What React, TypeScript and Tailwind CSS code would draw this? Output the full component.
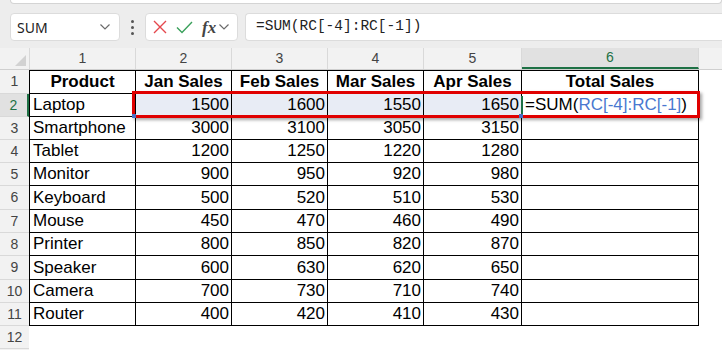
import React from 'react';

const rows = [
  { name: 'Laptop', v: [1500, 1600, 1550, 1650], h: 'h-[23px]' },
  { name: 'Smartphone', v: [3000, 3100, 3050, 3150], h: 'h-[23px]' },
  { name: 'Tablet', v: [1200, 1250, 1220, 1280], h: 'h-[23px]' },
  { name: 'Monitor', v: [900, 950, 920, 980], h: 'h-[23px]' },
  { name: 'Keyboard', v: [500, 520, 510, 530], h: 'h-[24px]' },
  { name: 'Mouse', v: [450, 470, 460, 490], h: 'h-[23px]' },
  { name: 'Printer', v: [800, 850, 820, 870], h: 'h-[23px]' },
  { name: 'Speaker', v: [600, 630, 620, 650], h: 'h-[24px]' },
  { name: 'Camera', v: [700, 730, 710, 740], h: 'h-[23px]' },
  { name: 'Router', v: [400, 420, 410, 430], h: 'h-[23px]' },
];

const widths = ['w-[107px]', 'w-[96px]', 'w-[96px]', 'w-[96px]', 'w-[98px]', 'w-[177px]'];
const headers = ['Product', 'Jan Sales', 'Feb Sales', 'Mar Sales', 'Apr Sales', 'Total Sales'];

const Chevron = () => (
  <svg width="12" height="8" viewBox="0 0 12 8" fill="none">
    <path d="M1.5 1.5 L6 6 L10.5 1.5" stroke="#6b6b6b" strokeWidth="1.2" />
  </svg>
);

const RowHead = ({ n, active, h }: { n?: number; active?: boolean; h: string }) => (
  <div
    className={`w-[29px] ${h} shrink-0 flex items-center justify-center text-[14px] border-b border-[#d9d9d9] ${
      active ? 'bg-[#e1e1e1] text-[#1e7145] border-r-2 border-r-[#1e7145]' : 'bg-[#f2f2f2] text-[#444]'
    }`}
  >
    {n}
  </div>
);

export default function App() {
  return (
    <div
      className="w-[722px] h-[350px] bg-[#ededed] overflow-hidden relative"
      style={{ fontFamily: '"Liberation Sans", Arial, sans-serif' }}
    >
      {/* ribbon edge */}
      <div className="ml-[10px] h-[4px] bg-white border border-t-0 border-[#d4d4d4] rounded-b-[5px]" />

      {/* formula bar */}
      <div className="mt-[9px] h-[28px] flex items-stretch pl-[10px]">
        <div className="w-[110px] bg-white border border-[#dcdcdc] rounded-[4px] flex items-center justify-between pl-[6px] pr-[8px]">
          <span className="text-[14px] text-[#222]" style={{ fontFamily: '"Noto Sans", sans-serif' }}>SUM</span>
          <Chevron />
        </div>
        <div className="w-[25px] flex flex-col items-center justify-center gap-[3px]">
          <div className="w-[3px] h-[3px] rounded-full bg-[#555]" />
          <div className="w-[3px] h-[3px] rounded-full bg-[#555]" />
          <div className="w-[3px] h-[3px] rounded-full bg-[#555]" />
        </div>
        <div className="w-[93px] bg-white border border-[#dcdcdc] rounded-[4px] flex items-center pl-[7px] gap-[9px]">
          <svg width="14" height="14" viewBox="0 0 14 14">
            <path d="M1 1 L13 13 M13 1 L1 13" stroke="#e5484d" strokeWidth="1.4" />
          </svg>
          <svg width="17" height="13" viewBox="0 0 17 13" fill="none">
            <path d="M1 6.5 L6 11.5 L16 1" stroke="#3aa05b" strokeWidth="1.4" />
          </svg>
          <div className="flex items-center gap-[2px]">
            <span className="text-[17px] italic font-bold text-[#444] leading-none" style={{ fontFamily: '"Liberation Serif", serif' }}>
              fx
            </span>
            <Chevron />
          </div>
        </div>
        <div className="flex-1 ml-[7px] bg-white border border-[#dcdcdc] border-r-0 rounded-l-[4px] flex items-center pl-[10px]">
          <span className="text-[14.5px] text-[#222]" style={{ fontFamily: '"Liberation Mono", monospace' }}>
            =SUM(RC[-4]:RC[-1])
          </span>
        </div>
      </div>

      {/* column headers */}
      <div className="mt-[7px] flex h-[22px] bg-[#f2f2f2] border-b border-[#cfcfcf]">
        <div className="w-[29px] relative shrink-0">
          <div
            className="absolute right-[3px] bottom-[3px] w-[11px] h-[11px] bg-[#d2d2d2]"
            style={{ clipPath: 'polygon(100% 0, 100% 100%, 0 100%)' }}
          />
        </div>
        {widths.map((w, i) => (
          <div
            key={i}
            className={`${w} shrink-0 flex items-center justify-center text-[14px] border-r border-[#d9d9d9] ${
              i === 0 ? 'border-l' : ''
            } ${i === 5 ? 'bg-[#e1e1e1] text-[#1e7145] border-b-2 border-b-[#1e7145]' : 'text-[#444]'}`}
          >
            {i + 1}
          </div>
        ))}
        <div className="flex-1" />
      </div>

      {/* grid */}
      <div className="bg-white text-[17px] text-black">
        <div className="flex">
          <RowHead n={1} h="h-[24px]" />
          {headers.map((t, i) => (
            <div
              key={t}
              className={`${widths[i]} h-[24px] shrink-0 border-t border-b border-r border-black font-bold flex items-center justify-center ${
                i === 0 ? 'border-l' : ''
              }`}
            >
              {t}
            </div>
          ))}
        </div>
        {rows.map((r, ri) => (
          <div key={r.name} className="flex">
            <RowHead n={ri + 2} h={r.h} active={ri === 0} />
            <div className={`${widths[0]} ${r.h} shrink-0 border-l border-b border-r border-black flex items-center pl-[3px]`}>
              {r.name}
            </div>
            {r.v.map((v, vi) => (
              <div
                key={vi}
                className={`${widths[vi + 1]} ${r.h} shrink-0 border-b border-r border-black flex items-center justify-end pr-[2px] ${
                  ri === 0 ? 'bg-[#e8ecf5]' : ''
                }`}
              >
                {v}
              </div>
            ))}
            <div className={`${widths[5]} ${r.h} shrink-0 border-b border-r border-black flex items-center pl-[3px] relative`}>
              {ri === 0 && (
                <>
                  <div className="absolute left-[-1px] top-[2px] bottom-[2px] w-[2px] bg-[#1e7145]" />
                  <span>
                    =SUM(<span className="text-[#4a78d0]">RC[-4]:RC[-1]</span>)
                  </span>
                </>
              )}
            </div>
          </div>
        ))}
        <div className="flex h-[23px]">
          <RowHead n={12} h="h-[23px]" />
        </div>
        <div className="flex h-[20px]">
          <RowHead h="h-[20px]" />
        </div>
      </div>

      {/* formula range highlight */}
      <div className="absolute left-[132px] top-[91px] w-[568px] h-[27px] border-[3px] border-[#e00000] shadow-[2px_2px_3px_rgba(0,0,0,0.35)]" />
      <div className="absolute left-[132px] top-[114px] w-[4px] h-[4px] bg-[#4a6fc4]" />
      <div className="absolute left-[519px] top-[114px] w-[4px] h-[4px] bg-[#4a6fc4]" />
    </div>
  );
}
